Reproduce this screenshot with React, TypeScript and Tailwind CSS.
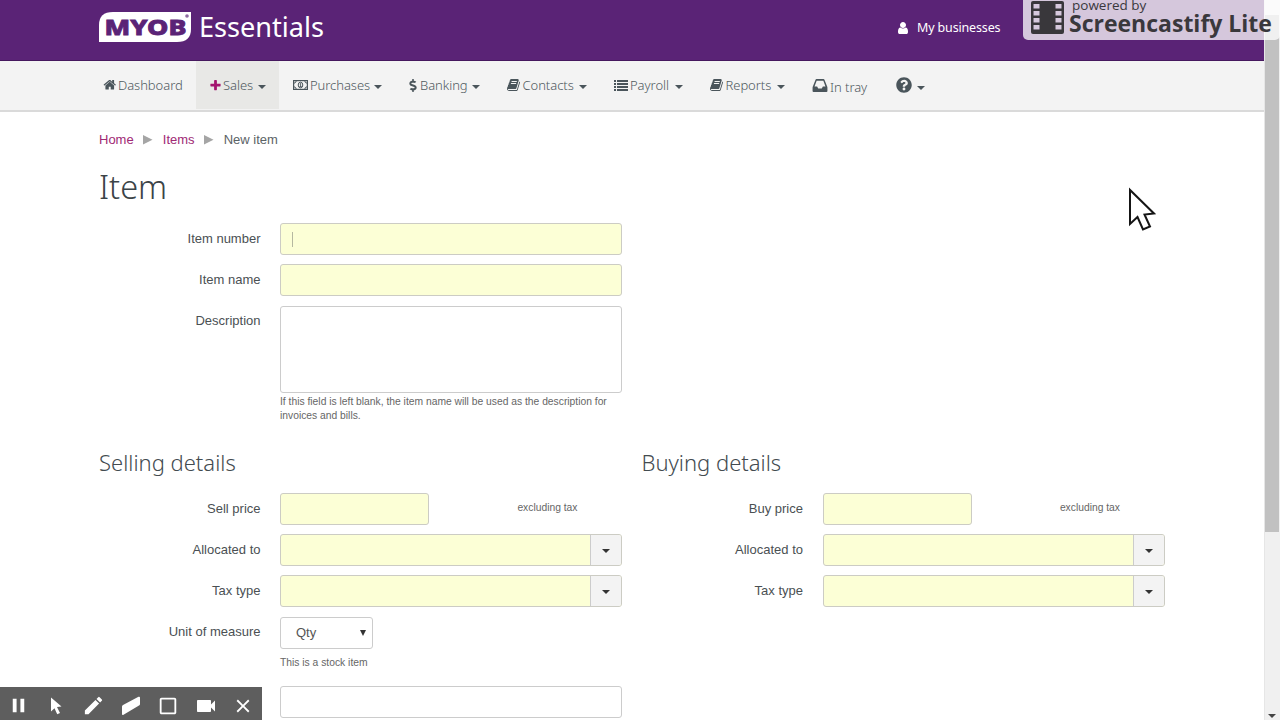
import type { ReactNode } from "react";
import { FaDollarSign, FaQuestionCircle } from "react-icons/fa";
import { MdCheckBoxOutlineBlank, MdClose, MdEdit, MdPause, MdVideocam } from "react-icons/md";

/* ------------------------------------------------------------------ */
/*  Icons                                                              */
/* ------------------------------------------------------------------ */

const paths = {
  home: "M1472 992v480q0 26-19 45t-45 19h-384v-384h-256v384h-384q-26 0-45-19t-19-45v-480q0-1 .5-3t.5-3l575-474 575 474q1 2 1 6zm223-69l-62 74q-8 9-21 11h-3q-13 0-21-7l-692-577-692 577q-12 8-24 7-13-2-21-11l-62-74q-8-10-7-23.5t11-21.5l719-599q32-26 76-26t76 26l244 204v-195q0-14 9-23t23-9h192q14 0 23 9t9 23v408l219 182q10 8 11 21.5t-7 23.5z",
  plus: "M1600 736v192q0 40-28 68t-68 28h-416v416q0 40-28 68t-68 28h-192q-40 0-68-28t-28-68v-416h-416q-40 0-68-28t-28-68v-192q0-40 28-68t68-28h416v-416q0-40 28-68t68-28h192q40 0 68 28t28 68v416h416q40 0 68 28t28 68z",
  book: "M1639 478q40 57 18 129l-275 906q-19 64-76.5 107.5t-122.5 43.5h-923q-77 0-148.5-53.5t-99.5-131.5q-24-67-2-127 0-4 3-27t4-37q1-8-3-21.5t-3-19.5q2-11 8-21t16.5-23.5 16.5-23.5q23-38 45-91.5t30-91.5q3-10 .5-30t-.5-28q3-11 17-28t17-23q21-36 42-92t25-90q1-9-2.5-32t.5-28q4-13 22-30.5t22-22.5q19-26 42.5-84.5t27.5-96.5q1-8-3-25.5t-2-26.5q2-8 9-18t18-23 17-21q8-12 16.5-30.5t15-35 16-36 19.5-32 26.5-23.5 36-11.5 47.5 5.5l-1 3q38-9 51-9h761q74 0 114 56t18 130l-274 906q-36 119-71.5 153.5t-128.5 34.5h-869q-27 0-38 15-11 16-1 43 24 70 144 70h923q29 0 56-15.5t35-41.5l300-987q7-22 5-57 38 15 59 43zm-1064 2q-4 13 2 22.5t20 9.5h608q13 0 25.5-9.5t16.5-22.5l21-64q4-13-2-22.5t-20-9.5h-608q-13 0-25.5 9.5t-16.5 22.5zm-83 256q-4 13 2 22.5t20 9.5h608q13 0 25.5-9.5t16.5-22.5l21-64q4-13-2-22.5t-20-9.5h-608q-13 0-25.5 9.5t-16.5 22.5z",
  user: "M1536 1399q0 109-62.5 187t-150.5 78h-854q-88 0-150.5-78t-62.5-187q0-85 8.5-160.5t31.5-152 58.5-131 94-89 134.5-34.5q131 128 313 128t313-128q76 0 134.5 34.5t94 89 58.5 131 31.5 152 8.5 160.5zm-256-887q0 159-112.5 271.5t-271.5 112.5-271.5-112.5-112.5-271.5 112.5-271.5 271.5-112.5 271.5 112.5 112.5 271.5z",
};

function Glyph({ name, className }: { name: keyof typeof paths; className: string }) {
  return (
    <svg viewBox="0 0 1792 1792" fill="currentColor" className={`shrink-0 ${className}`}>
      <path d={paths[name]} />
    </svg>
  );
}

function MoneyIcon() {
  return (
    <svg viewBox="0 0 15 10" className="h-[10px] w-[15px] shrink-0" fill="none" stroke="currentColor">
      <rect x="0.6" y="0.6" width="13.8" height="8.8" strokeWidth="1.2" />
      <path d="M1 3.2Q3 3 3.2 1M14 3.2Q12 3 11.8 1M1 6.8Q3 7 3.2 9M14 6.8Q12 7 11.8 9" strokeWidth="1" />
      <ellipse cx="7.5" cy="5" rx="2.3" ry="2.8" strokeWidth="1" />
      <path d="M6.8 4L7.6 3.4V6.6M6.5 6.6H8.7" strokeWidth="0.9" />
    </svg>
  );
}

function ListIcon() {
  return (
    <svg viewBox="0 0 14 11" className="h-[11px] w-[14px] shrink-0" fill="currentColor">
      {[0, 3, 6, 9].map((y) => (
        <path key={y} d={`M0 ${y}h2v2H0zM3 ${y}h11v2H3z`} />
      ))}
    </svg>
  );
}

function InboxIcon() {
  return (
    <svg viewBox="0 0 16 14" className="h-[13px] w-4 shrink-0" fill="currentColor">
      <path
        fillRule="evenodd"
        d="M3.2.7Q3.5 0 4.2 0h7.6q.7 0 1 .7L15.7 8q.3.6.3 1.3V13q0 1-1 1H1q-1 0-1-1V9.3Q0 8.6.3 8zM4.4 1.9L2.1 8h2.8l1.2 2.2h3.8L11.1 8h2.8l-2.3-6.1z"
      />
    </svg>
  );
}

function Caret({ className = "" }: { className?: string }) {
  return (
    <svg viewBox="0 0 8 4" className={`h-1 w-2 shrink-0 ${className}`} fill="currentColor">
      <path d="M0 0h8L4 4z" />
    </svg>
  );
}

/* ------------------------------------------------------------------ */
/*  Header                                                             */
/* ------------------------------------------------------------------ */

function Logo() {
  return (
    <svg viewBox="0 -5 232 45" className="h-[45px] w-[232px]" role="img">
      <path d="M1 31V14Q1 1 15 1H93V18Q93 31 79 31Z" fill="#fff" />
      <text
        x="6.5"
        y="23.5"
        textLength="82"
        lengthAdjust="spacingAndGlyphs"
        className="fill-[#5a2376] stroke-[#5a2376] font-['Noto_Sans'] text-[22px] font-extrabold"
        strokeWidth="0.8"
      >
        MYOB
      </text>
      <circle cx="89" cy="5" r="1.8" fill="#8d6aa1" />
      <text
        x="101"
        y="25.5"
        textLength="125"
        lengthAdjust="spacingAndGlyphs"
        className="fill-white font-['Noto_Sans'] text-[27px]"
      >
        Essentials
      </text>
    </svg>
  );
}

function TopBar() {
  return (
    <header className="flex h-[61px] shrink-0 items-start border-b border-[#45185e] bg-[#5a2376] pl-[98px] pt-[6px]">
      <Logo />
      <a className="ml-[566px] mt-[13px] flex items-center text-white">
        <Glyph name="user" className="size-[14px]" />
        <span className="ml-[7px] font-['Noto_Sans'] text-[12.5px] leading-[18px] tracking-[-0.15px]">My businesses</span>
      </a>
    </header>
  );
}

interface NavItem {
  label?: string;
  icon: ReactNode;
  width: string;
  caret?: boolean;
  active?: boolean;
  offset?: string;
}

const navItems: NavItem[] = [
  { label: "Dashboard", icon: <Glyph name="home" className="size-[13.5px]" />, width: "w-[107px]", offset: "pl-[1.5px]" },
  { label: "Sales", icon: <Glyph name="plus" className="-ml-px size-[13px] text-[#a3136f]" />, width: "w-[83px]", caret: true, active: true, offset: "pl-px" },
  { label: "Purchases", icon: <MoneyIcon />, width: "w-[116px]", caret: true, offset: "pl-0.5" },
  { label: "Banking", icon: <FaDollarSign className="h-[13px] w-2 shrink-0" />, width: "w-[98px]", caret: true, offset: "pl-[3px]" },
  { label: "Contacts", icon: <Glyph name="book" className="size-[14px]" />, width: "w-[107px]", caret: true, offset: "pl-[1.5px]" },
  { label: "Payroll", icon: <ListIcon />, width: "w-[96px]", caret: true, offset: "pl-0.5" },
  { label: "Reports", icon: <Glyph name="book" className="size-[14px]" />, width: "w-[102px]", caret: true, offset: "pl-[1.5px]" },
  { label: "In tray", icon: <InboxIcon />, width: "w-[84px]", offset: "pl-0.5 pt-[3px]" },
  { icon: <FaQuestionCircle className="size-4 shrink-0" />, width: "w-[56px]", caret: true },
];

function NavBar() {
  return (
    <nav className="flex h-[51px] shrink-0 border-b-2 border-[#dadada] bg-[#f3f3f3] pl-[89px] text-[#4a555b]">
      {navItems.map((item, i) => (
        <a
          key={i}
          className={`flex h-12 items-center pl-3.5 pr-[13.5px] ${item.width} ${item.active ? "bg-[#e8e8e6]" : ""}`}
        >
          {item.icon}
          {item.label && (
            <span className={`whitespace-nowrap font-['Noto_Sans'] text-[13px] font-light leading-[18px] tracking-[-0.05px] text-[#4f595e] ${item.offset ?? ""}`}>
              {item.label}
            </span>
          )}
          {item.caret && <Caret className={item.label ? "ml-auto mt-[3px]" : "ml-auto mt-[5px]"} />}
        </a>
      ))}
    </nav>
  );
}

function Breadcrumb() {
  const arrow = (
    <svg viewBox="0 0 9 9" className="mx-[9.8px] size-[9.5px]" fill="#a5a5a5">
      <path d="M0 0L9 4.5L0 9z" />
    </svg>
  );
  return (
    <div className="flex h-5 items-center pl-px text-[13px] text-[#a02a75]">
      <a>Home</a>
      {arrow}
      <a>Items</a>
      {arrow}
      <span className="text-[#5b6366]">New item</span>
    </div>
  );
}

/* ------------------------------------------------------------------ */
/*  Form                                                               */
/* ------------------------------------------------------------------ */

const required = "rounded-[3px] border border-[#ccccc4] bg-[#fcffd6]";

function Row({ label, children }: { label?: string; children: ReactNode }) {
  return (
    <div className="flex">
      <label className="mr-[19.5px] h-[33px] w-[162.5px] shrink-0 text-right text-[13px] leading-8 text-[#4a5053]">{label}</label>
      {children}
    </div>
  );
}

function Combo() {
  return (
    <div className={`flex h-8 w-[342.4px] overflow-hidden ${required}`}>
      <div className="flex-1" />
      <div className="flex w-[31px] items-center justify-center border-l border-[#ccc] bg-[#f3f3f3] text-[#333]">
        <Caret className="mt-0.5" />
      </div>
    </div>
  );
}

function PriceSection({ title, priceLabel, children }: { title: string; priceLabel: string; children?: ReactNode }) {
  return (
    <section className="w-[542.5px]">
      <h2 className="mb-[15px] h-[31px] pl-px font-['Noto_Sans'] text-[22px] font-light leading-[30px] text-[#434b50]">{title}</h2>
      <div className="flex flex-col gap-2">
        <Row label={priceLabel}>
          <input className={`h-8 w-[149.4px] ${required}`} />
          <span className="ml-[88px] text-[10.3px] leading-[30px] text-[#666]">excluding tax</span>
        </Row>
        <Row label="Allocated to">
          <Combo />
        </Row>
        <Row label="Tax type">
          <Combo />
        </Row>
        {children}
      </div>
    </section>
  );
}

function ItemForm() {
  return (
    <main className="flex-1 pl-[98px] pt-[18px]">
      <Breadcrumb />
      <h1 className="mt-4 h-[41px] pl-px font-['Noto_Sans'] text-[32.5px] font-light leading-[42px] text-[#3b4347]">Item</h1>

      <div className="mt-4 flex flex-col gap-2">
        <Row label="Item number">
          <div className={`flex h-8 w-[342.4px] items-center pl-[11px] ${required}`}>
            <span className="h-[15px] w-px bg-[#b5b8a0]" />
          </div>
        </Row>
        <Row label="Item name">
          <input className={`h-8 w-[342.4px] ${required}`} />
        </Row>
        <Row label="Description">
          <div className="w-[342.4px]">
            <textarea className="mt-px block h-[87px] w-full resize-none rounded-[3px] border border-[#ccc] bg-white" />
            <p className="pt-0.5 text-[10.3px] leading-[14px] text-[#666]">
              If this field is left blank, the item name will be used as the description for invoices and bills.
            </p>
          </div>
        </Row>
      </div>

      <div className="mt-6 flex">
        <PriceSection title="Selling details" priceLabel="Sell price">
          <Row label="Unit of measure">
            <div>
              <div className="mt-px flex h-8 w-[93.4px] items-center justify-between rounded-[3px] border border-[#ccc] bg-white pl-[15px] pr-[6px] text-[13px] text-[#555]">
                Qty
                <svg viewBox="0 0 6 6" className="size-1.5" fill="#333">
                  <path d="M0 0h6L3 6z" />
                </svg>
              </div>
              <p className="mt-[7px] text-[10.3px] leading-[14px] text-[#666]">This is a stock item</p>
              <input className="mt-4 block h-8 w-[342.4px] rounded-[3px] border border-[#ccc] bg-white" />
            </div>
          </Row>
        </PriceSection>
        <PriceSection title="Buying details" priceLabel="Buy price" />
      </div>
    </main>
  );
}

/* ------------------------------------------------------------------ */
/*  Overlays                                                           */
/* ------------------------------------------------------------------ */

function Watermark() {
  return (
    <div className="absolute right-0 top-0 flex h-10 w-[257px] rounded-b-[5px] bg-white/75 pl-2 text-[#3a383c]">
      <svg viewBox="0 0 33 33" className="mt-px size-[33px] shrink-0">
        <rect width="33" height="33" rx="2" fill="#39373b" />
        {[3, 10, 17, 24].map((y) => (
          <path key={y} d={`M2.5 ${y}h6v4.5h-6zM24.5 ${y}h6v4.5h-6z`} fill="#d6c8dd" />
        ))}
      </svg>
      <div className="ml-[5px] whitespace-nowrap font-['Open_Sans']">
        <div className="pl-[3px] text-[13.5px] leading-[11px]">powered by</div>
        <div className="text-[23px] font-bold leading-6">Screencastify Lite</div>
      </div>
    </div>
  );
}

function RecorderToolbar() {
  const tools = [
    <MdPause className="size-[23px]" />,
    <svg viewBox="0 0 20 20" className="size-5" fill="currentColor">
      <path d="M5 1.5L15.5 10.5L11 11L14 17L11.2 18.3L8.5 12.3L5 15.5z" />
    </svg>,
    <MdEdit className="size-[23px]" />,
    <svg viewBox="0 0 20 20" className="size-5" fill="currentColor">
      <path d="M1 10.5Q1 9.5 2 9L17.5.8Q19 .2 19 1.8V8Q19 9 18 9.5L2.5 18.8Q1 19.5 1 18z" />
    </svg>,
    <MdCheckBoxOutlineBlank className="size-[22px]" />,
    <MdVideocam className="size-[24px]" />,
    <MdClose className="size-[22px]" />,
  ];
  return (
    <div className="absolute bottom-0 left-0 flex h-[33px] w-[262px] items-center bg-[#5e5e5e] pt-1 text-white">
      {tools.map((tool, i) => (
        <button key={i} className="flex w-[37.45px] justify-center">
          {tool}
        </button>
      ))}
    </div>
  );
}

function Scrollbar() {
  return (
    <div className="flex w-4 flex-col border-l border-[#e6e6e6] bg-[#f0f0f0]">
      <div className="h-[15px]" />
      <div className="h-[517px] w-[14px] bg-[#c1c1c1]" />
      <Caret className="mb-[2px] ml-[3px] mt-auto text-[#444]" />
    </div>
  );
}

export default function App() {
  return (
    <div className="relative flex h-[720px] w-[1280px] overflow-hidden bg-white font-['Liberation_Sans',sans-serif]">
      <div className="flex w-[1264px] flex-col">
        <TopBar />
        <NavBar />
        <ItemForm />
      </div>
      <Scrollbar />
      <Watermark />
      <RecorderToolbar />
      <svg viewBox="0 0 28 44" className="absolute left-[1128px] top-[187px] h-[44px] w-7">
        <path d="M2 3V37L9.5 30L15 42.5L22 39.5L16.5 27.5L26 26.5z" fill="#fff" stroke="#151515" strokeWidth="2" />
      </svg>
    </div>
  );
}
